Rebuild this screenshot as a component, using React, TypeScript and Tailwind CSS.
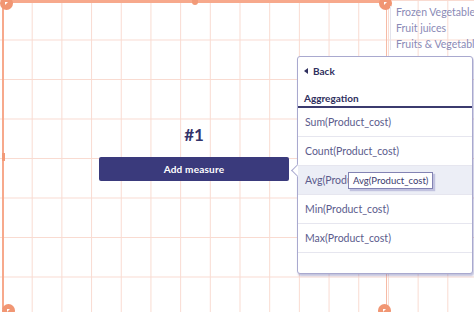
import React from 'react';

const rows = ['Sum', 'Count', 'Avg', 'Min', 'Max'];
const categories = ['Frozen Vegetables', 'Fruit juices', 'Fruits & Vegetables'];

function Handle({ className }: { className: string }) {
  return (
    <span
      className={`absolute w-[13px] h-[13px] rounded-full bg-[#f19673] flex items-center justify-center ${className}`}
    >
      <span className="w-[4px] h-[4px] bg-white [clip-path:polygon(0_0,100%_0,0_100%)]" />
    </span>
  );
}

export default function App() {
  return (
    <div className="relative w-[474px] h-[312px] overflow-hidden bg-white font-['Lato',sans-serif] bg-[linear-gradient(to_right,#f9dbd1_1px,transparent_1px),linear-gradient(to_bottom,#f9dbd1_1px,transparent_1px)] bg-size-[29.7px_39.5px] bg-position-[2px_0px]">
      {/* selected widget frame */}
      <div className="absolute left-[2px] top-0 w-[385px] h-[309px] border-t-[3px] border-l-2 border-r-[1.5px] border-[#f7a98c] border-r-[#f6bba6]">
        <Handle className="-left-[4px] -top-[6px]" />
        <Handle className="-right-[6px] -top-[6px]" />
        <Handle className="-left-[2px] -bottom-[8px]" />
        <Handle className="-right-[5px] -bottom-[8px]" />
        <span className="absolute left-1/2 -top-[3px] w-[6px] h-[5px] -ml-[3px] bg-[#f29a78] rounded-b-sm" />
        <span className="absolute -left-[2px] top-[150px] w-[3px] h-[8px] bg-[#f29a78]" />

        <div className="h-full flex flex-col items-center justify-center pb-[6px] pr-[2px]">
          <div className="text-[17px] leading-[20px] font-bold text-[#33336b]">#1</div>
          <button className="mt-[12px] w-[190px] h-[24px] rounded-[2px] bg-[#3a3a7c] text-white text-[10px] font-bold tracking-[0.2px]">
            Add measure
          </button>
        </div>
      </div>

      {/* category list to the right */}
      <div className="absolute left-[390px] top-[6px] pl-[5px] border-l border-[#e3e3ec] flex flex-col gap-[4px] text-[10.5px] leading-[12px] text-[#8a8ab6] whitespace-nowrap">
        {categories.map((c) => (
          <span key={c}>{c}</span>
        ))}
      </div>

      {/* aggregation dropdown */}
      <div className="absolute left-[297px] top-[56px] w-[176px] h-[218px] flex flex-col bg-white border border-[#a9a9cf] rounded-[3px] shadow-[1px_2px_2px_rgba(120,120,180,0.45)]">
        <span className="absolute -left-[5px] top-[109px] w-[9px] h-[9px] bg-white border-l border-b border-[#a9a9cf] rotate-45" />
        <div className="h-[28px] shrink-0 flex items-center pl-[6px] gap-[5px] text-[10px] leading-[12px] font-bold text-[#2f2f5e]">
          <span className="w-0 h-0 border-y-[3.5px] border-y-transparent border-r-[4px] border-r-[#2f2f5e]" />
          Back
        </div>
        <div className="h-[23px] shrink-0 flex items-end pb-[2px] pl-[6px] text-[10px] leading-[12px] font-bold text-[#2f2f5e] border-b-2 border-[#3b3b6e]">
          Aggregation
        </div>
        {rows.map((r) => (
          <div
            key={r}
            className={`relative h-[29px] shrink-0 flex items-center pl-[7px] text-[10.5px] leading-[12px] text-[#5b5b8c] border-b border-[#e6e6ef] ${
              r === 'Avg' ? 'bg-[#eceef6]' : ''
            }`}
          >
            {r}(Product_cost)
            {r === 'Avg' && (
              <span className="absolute left-[50px] top-[6px] h-[17px] px-[4px] flex items-center bg-white border border-[#8383b3] text-[9.5px] text-[#3a3a6e] shadow-[2px_2px_1px_rgba(150,150,200,0.5)]">
                Avg(Product_cost)
              </span>
            )}
          </div>
        ))}
      </div>
    </div>
  );
}
